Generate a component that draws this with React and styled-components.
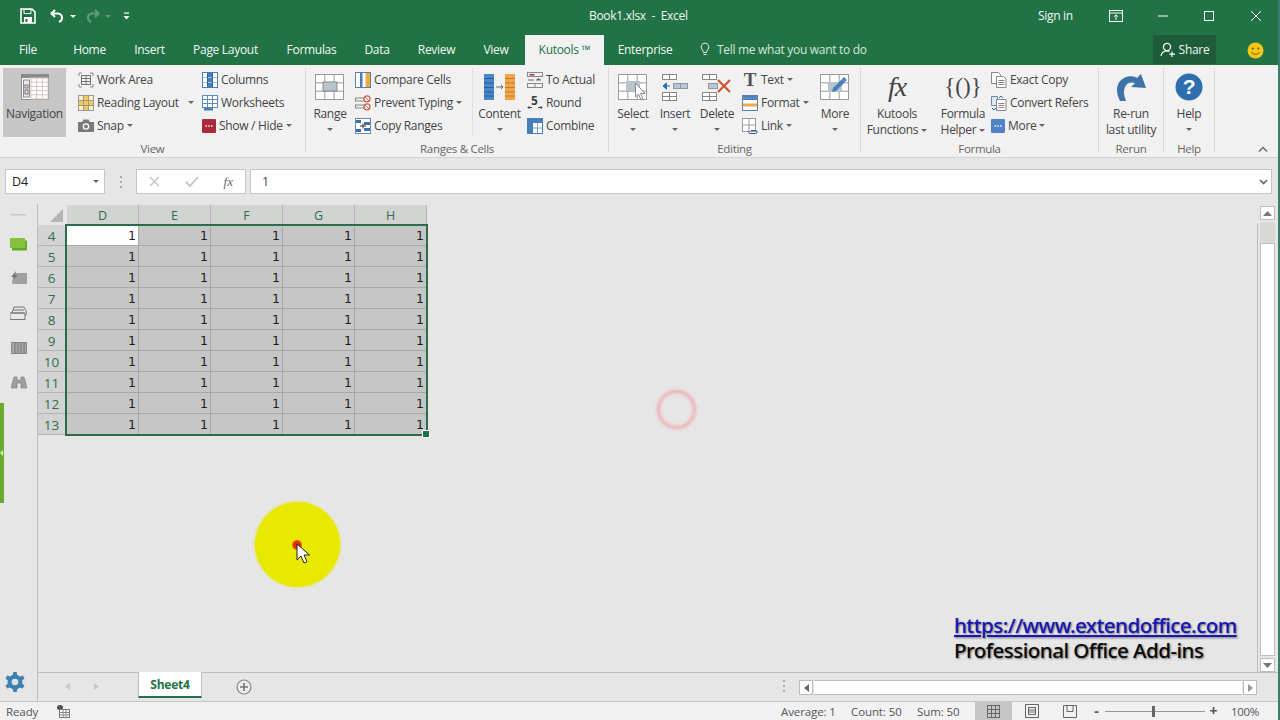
import React from 'react';
import styled, { createGlobalStyle } from 'styled-components';

const Global = createGlobalStyle`
  html, body { margin: 0; padding: 0; background: #e6e6e6; }
  * { box-sizing: border-box; }
  body { font-family: "Open Sans", "Noto Sans", sans-serif; }
`;

const Page = styled.div`
  position: relative; width: 1280px; height: 720px; overflow: hidden;
  display: flex; flex-direction: column; background: #e6e6e6;
  font-size: 12px; color: #444; letter-spacing: -0.3px;
  &::after { content: ""; position: absolute; right: 0; top: 0; bottom: 0; width: 2px; background: #3b7d6b; }
`;
const Header = styled.header`background: #217346; color: #f2f7f4; height: 65px; flex: none;`;
const TitleRow = styled.div`height: 35px; display: flex; align-items: center; padding-bottom: 3px;`;
const Qat = styled.div`display: flex; align-items: center; padding-left: 20px; width: 589px;`;
const QatSlot = styled.span`display: flex; align-items: center; width: ${p => p.$w}px; opacity: ${p => p.$dim ? 0.3 : 1};`;
const Title = styled.div`width: 449px; margin-top: -1px;`;
const SignIn = styled.div`width: 55px; margin-top: -1px;`;
const WinBtn = styled.span`width: 46.5px; display: flex; justify-content: center;`;
const TabRow = styled.nav`height: 30px; display: flex; align-items: stretch;`;
const Tab = styled.div`
  width: ${p => p.$w}px; display: flex; align-items: center; justify-content: center; padding-bottom: 2px;
  background: ${p => p.$active ? '#f1f1f1' : 'transparent'};
  color: ${p => p.$active ? '#217346' : 'inherit'};
`;
const TellMe = styled.div`width: 467px; padding: 0 0 2px 14px; display: flex; align-items: center; gap: 7px; color: #d6e6dc;`;
const Share = styled.div`
  width: 63px; height: 29px; background: #1e5c39; display: flex; align-items: center;
  justify-content: center; gap: 3px;
`;
const Smile = styled.div`margin-left: 31px; align-self: center;`;

const Ribbon = styled.section`
  height: 93px; flex: none; background: #f1f1f1; border-bottom: 1px solid #d2d2d2; display: flex;
`;
const Group = styled.div`
  width: ${p => p.$w}px; flex: none; display: flex; flex-direction: column;
  border-right: 1px solid #d8d8d8; margin-top: 3px; margin-bottom: 5px;
`;
const GroupBody = styled.div`flex: 1; display: flex; padding-left: ${p => p.$pad || 0}px;`;
const GroupLabel = styled.div`height: 13px; text-align: center; font-size: 11.5px; color: #666; line-height: 20px;`;
const Large = styled.div`
  width: ${p => p.$w}px; flex: none; display: flex; flex-direction: column; align-items: center;
  height: 69px; line-height: 16px; text-align: center; white-space: nowrap;
  background: ${p => p.$on ? '#c6c6c6' : 'transparent'};
  margin-right: ${p => p.$mr || 0}px;
`;
const LargeIcon = styled.div`height: 38px; display: flex; align-items: center; justify-content: center; flex: none;`;
const Col = styled.div`
  width: ${p => p.$w}px; flex: none; padding-left: ${p => p.$pl || 0}px; display: flex; flex-direction: column;
  border-right: ${p => p.$div ? '1px solid #e0e0e0' : 'none'}; height: 69px;
`;
const Item = styled.div`height: 23px; display: flex; align-items: center; gap: 3px; white-space: nowrap;`;
const Caret = styled.span`
  display: inline-block; width: 0; height: 0; flex: none;
  border-left: 3px solid transparent; border-right: 3px solid transparent;
  border-top: 3px solid ${p => p.$c || '#666'};
  margin-left: ${p => p.$ml || 0}px; vertical-align: middle;
`;
const CaretLine = styled.div`height: 16px; display: flex; align-items: center; justify-content: center;`;
const Collapse = styled.div`margin: auto 12px 4px auto;`;

const FormulaBar = styled.div`
  height: 46px; flex: none; display: flex; padding: 11px 8px 0 5px; align-items: flex-start;
`;
const Field = styled.div`
  height: 25px; background: #fff; border: 1px solid #c6c6c6; display: flex; align-items: center;
  width: ${p => p.$w ? p.$w + 'px' : 'auto'}; flex: ${p => p.$w ? 'none' : 1};
  color: #444; font-size: 12.5px; letter-spacing: 0;
`;
const NameBox = styled(Field)`padding: 0 5px 0 6px; justify-content: space-between; color: #222;`;
const Grip = styled.div`width: 31px; height: 25px; display: flex; align-items: center; justify-content: center;`;
const FxButtons = styled(Field)`justify-content: space-between; padding: 0 12px; margin-right: 4px;`;
const FormulaInput = styled(Field)`padding: 0 3px 0 11px; justify-content: space-between;`;

const Work = styled.div`flex: 1; display: flex; min-height: 0;`;
const Side = styled.aside`
  width: 38px; flex: none; border-right: 1px solid #bdbdbd; position: relative;
  display: flex; flex-direction: column; align-items: center;
`;
const SideSlot = styled.div`
  height: 35px; display: flex; align-items: center; justify-content: center; width: 100%;
  padding-top: ${p => p.$pt || 0}px;
`;
const SideDash = styled.div`height: 21px; width:100%; display:flex; align-items:center; justify-content:center;`;
const SideBar = styled.div`
  position: absolute; left: 0; top: 199px; width: 4px; height: 100px; background: #6aab2e;
  &::after { content: ""; position: absolute; left: 0; top: 47px; border-left: 3px solid #d8e8c8; border-top: 3px solid transparent; border-bottom: 3px solid transparent; transform: scaleX(-1); }
`;
const Gear = styled.div`margin-top: auto; margin-bottom: 9px; margin-left: -8px;`;
const Right = styled.div`flex: 1; display: flex; flex-direction: column; min-width: 0;`;
const SheetArea = styled.div`height: 469px; display: flex; flex: none; border-bottom: 1px solid #bdbdbd;`;
const TableWrap = styled.div`flex: 1; padding-top: 1px;`;
const Table = styled.div`
  display: grid; grid-template-columns: 29px repeat(5, 72px); grid-template-rows: 20px repeat(10, 21px);
  width: max-content; position: relative;
`;
const Corner = styled.div`background: #e6e6e6; display: flex; align-items: flex-end; justify-content: flex-end; padding: 0 4px 3px 0;`;
const ColHead = styled.div`
  background: #d2d4d2; border-right: 1px solid #b4b4b4; color: #2f6b4f; display: flex; align-items: center;
  justify-content: center; font-size: 12.5px; letter-spacing: 0;
`;
const RowHead = styled.div`
  background: #d2d3d2; border-bottom: 1px solid #b4b4b4; color: #2f6b4f; display: flex; align-items: center;
  justify-content: center; font-size: 13.5px; letter-spacing: 0; padding: 1px 2px 0 0;
`;
const Cell = styled.div`
  background: ${p => p.$first ? '#ffffff' : '#c6c6c6'}; border-right: 1px solid #a9a9a9; border-bottom: 1px solid #a9a9a9;
  display: flex; align-items: center; justify-content: flex-end; padding: 1px 2px 0 0;
  font-family: "DejaVu Sans", sans-serif; font-size: 12.5px; color: #1c1c1c; letter-spacing: 0;
`;
const Selection = styled.div`
  position: absolute; left: 27px; top: 19px; width: 363px; height: 212px; border: 2px solid #2c6b4e; pointer-events: none;
`;
const Handle = styled.div`position: absolute; right: -3px; bottom: -3px; width: 6px; height: 6px; background: #217346; outline: 1px solid #fff;`;
const VScroll = styled.div`
  width: 23px; flex: none; position: relative; padding: 2px 5px 0 3px; display: flex; flex-direction: column;
  &::before { content: ""; position: absolute; left: 0; top: 20px; bottom: 0; width: 1px; background: #bdbdbd; }
`;
const ScrollBtn = styled.div`
  height: ${p => p.$h || 14}px; width: ${p => p.$w || 15}px; flex: none; background: #fff; border: 1px solid #bdbdbd;
  display: flex; align-items: center; justify-content: center;
`;
const VTrack = styled.div`flex: 1; display: flex; flex-direction: column; padding: 2px 0;`;
const VGap = styled.div`height: 21px; flex: none; background: #d8d8d6;`;
const VThumb = styled.div`flex: 1; background: #fff; border: 1px solid #bdbdbd;`;

const TabsBar = styled.div`flex: 1; display: flex; align-items: flex-start;`;
const NavArrows = styled.div`width: 100px; display: flex; gap: 24px; padding: 10px 0 0 27px;`;
const SheetTab = styled.div`
  width: 64px; height: 26px; margin-top: -1px; background: #fff; border-bottom: 2px solid #217346; border-left: 1px solid #bdbdbd; border-right: 1px solid #bdbdbd;
  color: #217346; font-weight: 700; font-size: 12px; display: flex; align-items: center; justify-content: center; letter-spacing: -0.2px;
`;
const AddSheet = styled.div`margin: 6px 0 0 34px; width: 16px;`;
const TabGrip = styled.div`margin: 7px 0 0 531px; width: 16px;`;
const HScroll = styled.div`width: 458px; height: 15px; margin: 7px 0 0 0; display: flex; flex: none;`;
const HThumb = styled.div`flex: 1; background: #fff; border-top: 1px solid #bdbdbd; border-bottom: 1px solid #bdbdbd; margin: 0 1px;`;

const Status = styled.footer`
  height: 19px; flex: none; background: #f1f1f1; border-top: 1px solid #c6c6c6; display: flex; align-items: center;
  font-size: 11.5px; color: #555; padding-left: 6px; letter-spacing: -0.1px;
`;
const Ready = styled.div`width: 51px;`;
const StatusStat = styled.div`width: ${p => p.$w}px; flex: none; white-space: nowrap;`;
const ViewBtn = styled.div`
  width: ${p => p.$w}px; height: 18px; flex: none; display: flex; align-items: center; justify-content: center;
  background: ${p => p.$on ? '#c6c6c6' : 'transparent'};
`;
const Zoomer = styled.div`display: flex; align-items: center; margin-left: 3px; width: 130px; height: 18px;`;
const ZoomTrack = styled.div`width: 100px; height: 1px; background: #999; margin: 0 4px; position: relative;`;
const ZoomThumb = styled.div`position: absolute; left: 47px; top: -5px; width: 3px; height: 11px; background: #666;`;
const ZoomSign = styled.span`font-size: 14px; font-weight: 700; width: 9px; text-align: center; color: #555; line-height: 1;`;
const Percent = styled.div`margin-left: 9px; letter-spacing: -0.3px;`;

const Watermark = styled.div`
  position: absolute; left: 954px; top: 613px; font-family: "Noto Sans", sans-serif; font-weight: 500;
  font-size: 20.6px; line-height: 25px; letter-spacing: -0.55px; white-space: nowrap;
  text-shadow: 1px 1px 2px rgba(0,0,0,0.5);
`;
const WmLink = styled.div`color: #1515b8; text-decoration: underline; text-underline-offset: 2px; text-decoration-thickness: 2px;`;
const WmText = styled.div`color: #0a0a0a;`;
const Highlight = styled.div`
  position: absolute; left: 255px; top: 502px; width: 85px; height: 85px; border-radius: 50%;
  background: #e8e800; box-shadow: 0 0 3px #e8e800; pointer-events: none;
`;
const RedDot = styled.div`
  position: absolute; left: 37px; top: 38px; width: 10px; height: 10px; border-radius: 50%;
  background: radial-gradient(circle, #e02a10 40%, #f09000 90%);
`;
const CursorWrap = styled.div`position: absolute; left: 296px; top: 543px; pointer-events: none; line-height: 0;`;
const Ripple = styled.div`
  position: absolute; left: 657px; top: 390px; width: 39px; height: 39px; border-radius: 50%;
  border: 3px solid #eeb4b8; filter: blur(0.8px); box-shadow: inset 0 0 3px #e9c4c6, 0 0 3px #e9c4c6;
`;

const Svg = ({ w = 16, h = 16, children, vb }) => (
  <svg width={w} height={h} viewBox={vb || `0 0 ${w} ${h}`} fill="none" style={{ display: 'block', flex: 'none' }}>{children}</svg>
);

const GridGlyph = ({ x = 0.5, y = 0.5, w = 27, h = 24, cols = 4, rows = 4, c = '#9a9a9a', fill = '#fff' }) => {
  const l = [];
  for (let i = 1; i < cols; i++) l.push(<line key={'c' + i} x1={x + w * i / cols} x2={x + w * i / cols} y1={y} y2={y + h} stroke={c} />);
  for (let i = 1; i < rows; i++) l.push(<line key={'r' + i} y1={y + h * i / rows} y2={y + h * i / rows} x1={x} x2={x + w} stroke={c} />);
  return <g><rect x={x} y={y} width={w} height={h} fill={fill} stroke={c} />{l}</g>;
};

const icons = {
  save: <Svg w={16} h={16}><path d="M1 1h11l3 3v11H1z" stroke="#fff" strokeWidth="1.6"/><path d="M4 1.5h7v4H4z" stroke="#fff" fill="#217346"/><path d="M4 9h8v6H4z" fill="#fff"/><rect x="5.5" y="11" width="2" height="3" fill="#217346"/></Svg>,
  undo: <Svg w={15} h={14}><path d="M5 1L1.5 4.5 5 8" stroke="#fff" strokeWidth="2"/><path d="M2 4.5h6a4 4 0 0 1 4 4.2c0 2-1 3.5-3 4.3" stroke="#fff" strokeWidth="2"/></Svg>,
  redo: <Svg w={15} h={14}><path d="M10 1l3.5 3.5L10 8" stroke="#fff" strokeWidth="2"/><path d="M13 4.5H7a4 4 0 0 0-4 4.2c0 2 1 3.5 3 4.3" stroke="#fff" strokeWidth="2"/></Svg>,
  custom: <Svg w={7} h={8}><rect x="1" y="0.5" width="5" height="1.2" fill="#fff"/><path d="M0.5 4h6L3.5 7.5z" fill="#fff"/></Svg>,
  ribbonOpts: <Svg w={14} h={12}><rect x=".5" y=".5" width="13" height="11" stroke="#fff"/><line x1="0" x2="14" y1="3" y2="3" stroke="#fff"/><path d="M7 10V5M5 6.8L7 4.8l2 2" stroke="#fff"/></Svg>,
  min: <Svg w={10} h={10}><line x1="0" x2="10" y1="5" y2="5" stroke="#fff"/></Svg>,
  max: <Svg w={10} h={10}><rect x=".5" y=".5" width="9" height="9" stroke="#fff"/></Svg>,
  close: <Svg w={10} h={10}><path d="M0 0l10 10M10 0L0 10" stroke="#fff"/></Svg>,
  bulb: <Svg w={10} h={14}><path d="M5 1a4 4 0 0 0-2.500 7c.7.700.8 1.500.9 2.500h3.200c.1-1 .2-1.800.9-2.500A4 4 0 0 0 5 1z" stroke="#e4efe8"/><path d="M3.500 12.500h3" stroke="#e4efe8"/></Svg>,
  person: <Svg w={16} h={16}><circle cx="7" cy="5" r="3.600" stroke="#fff" strokeWidth="1.200"/><path d="M1 14c.6-3.200 2.600-5 6-5 1 0 1.700.2 2.400.5" stroke="#fff" strokeWidth="1.200"/><path d="M12 9.500v5.500M9.300 12.200H15" stroke="#fff" strokeWidth="1.200"/></Svg>,
  smile: <Svg w={17} h={17}><circle cx="8.500" cy="8.500" r="8" fill="#f5c518"/><circle cx="5.800" cy="6.500" r="1.100" fill="#7a5a00"/><circle cx="11.200" cy="6.500" r="1.100" fill="#7a5a00"/><path d="M4.500 10.300c1.500 2.600 6.500 2.600 8 0" stroke="#7a5a00" strokeWidth="1"/></Svg>,
  nav: <Svg w={28} h={26}><rect x=".5" y=".5" width="27" height="25" fill="#fff" stroke="#8a8a8a"/><rect x="1" y="1" width="26" height="3" fill="#8a8a8a"/><GridGlyph x={10} y={4} w={17} h={21} cols={3} rows={5} c="#d8c4c0"/><rect x="2.500" y="6" width="6" height="17" fill="#e8e8e8" stroke="#8a8a8a"/><rect x="4" y="11" width="3" height="3" stroke="#777"/><rect x="4" y="16" width="3" height="4" stroke="#777"/></Svg>,
  workArea: <Svg w={16} h={16}><path d="M1 4V1h3M12 1h3v3M15 12v3h-3M4 15H1v-3" stroke="#888"/><rect x="3.500" y="3.500" width="9" height="9" stroke="#777"/><path d="M3.500 6.500h9M3.500 9.500h9M8 3.500v9" stroke="#777"/></Svg>,
  reading: <Svg w={16} h={16}><rect x=".5" y=".5" width="15" height="15" fill="#f8f0c8" stroke="#9a9a9a"/><rect x="6" y="1" width="4" height="14" fill="#f0c860"/><rect x="1" y="6" width="14" height="4" fill="#f0c860"/><path d="M5.500 1v14M10.500 1v14M1 5.500h14M1 10.500h14" stroke="#a09878"/></Svg>,
  camera: <Svg w={16} h={13}><path d="M0 3h4l1.500-2.500h5L12 3h4v10H0z" fill="#7a7a7a"/><circle cx="8" cy="7.500" r="3.300" fill="#fff"/><circle cx="8" cy="7.500" r="2" fill="#7a7a7a"/></Svg>,
  columns: <Svg w={16} h={16}><rect x=".5" y=".5" width="15" height="15" fill="#fff" stroke="#4a7ebb"/><rect x="5.500" y="1" width="5" height="14" fill="#4a7ebb"/><path d="M1 5.500h14M1 10.500h14" stroke="#a8c4e0"/><path d="M5.500 1v14M10.500 1v14" stroke="#2f5f9a"/></Svg>,
  worksheets: <Svg w={16} h={16}><GridGlyph x={.5} y={.5} w={15} h={12} cols={3} rows={3} c="#5b8cc0"/><rect x="2" y="13" width="9" height="2.500" fill="#4a7ebb"/></Svg>,
  showHide: <Svg w={14} h={14}><rect width="14" height="14" rx="1" fill="#a92b3a"/><path d="M3.500 7h1.400M6.300 7h1.400M9.100 7h1.400" stroke="#fff" strokeWidth="1.400"/></Svg>,
  range: <Svg w={30} h={26}><GridGlyph x={.5} y={.5} w={28} h={25} cols={3} rows={3}/><rect x="8" y="8" width="14" height="9" fill="#b8c4cc" stroke="#8a8a8a"/></Svg>,
  compare: <Svg w={16} h={16}><rect x=".5" y=".5" width="15" height="15" fill="#fff" stroke="#5b7fa8"/><rect x="5" y="1" width="2.500" height="14" fill="#4a7ebb"/><rect x="10.500" y="1" width="4.500" height="14" fill="#f0a848"/></Svg>,
  prevent: <Svg w={16} h={16}><rect x=".5" y="3" width="9" height="3" stroke="#888"/><rect x=".5" y="10" width="9" height="3" stroke="#888"/><circle cx="12" cy="3.800" r="3" fill="#fff" stroke="#d0604a" strokeWidth="1.300"/><circle cx="12" cy="11.800" r="3" fill="#fff" stroke="#d0604a" strokeWidth="1.300"/><path d="M10 2l4 4M10 10l4 4" stroke="#d0604a"/></Svg>,
  copyRanges: <Svg w={16} h={16}><rect x=".5" y=".5" width="15" height="15" fill="#fff" stroke="#6a8ab0"/><rect x="1" y="2" width="5" height="3" fill="#3a70b0"/><rect x="9" y="4" width="6" height="3" fill="#3a70b0"/><rect x="1" y="11" width="5" height="3" fill="#3a70b0"/><rect x="9" y="10" width="6" height="3" fill="#3a70b0"/><path d="M5 8h6M8 5.500v5" stroke="#333"/></Svg>,
  content: <Svg w={31} h={26}><rect x="0" y="0" width="10" height="26" fill="#4a88cc"/><path d="M0 4.500h10M0 9h10M0 13.500h10M0 18h10M0 22h10" stroke="#2a5a98"/><rect x="21" y="0" width="10" height="26" fill="#f3a54a"/><path d="M21 4.500h10M21 9h10M21 13.500h10M21 18h10M21 22h10" stroke="#c07a28"/><path d="M12 13h7M17 11l2 2-2 2" stroke="#666"/></Svg>,
  toActual: <Svg w={16} h={16}><rect x=".5" y=".5" width="15" height="4" stroke="#888"/><rect x="2.500" y="2" width="5" height="1.500" fill="#b03030"/><path d="M1 8h6M9 8h5" stroke="#666"/><path d="M11.500 6l-2 2h4z" fill="#666"/><rect x=".5" y="11.500" width="15" height="4" stroke="#888"/><path d="M8 11.500v4" stroke="#888"/></Svg>,
  round: <Svg w={16} h={16}><path d="M1 12.500h4M1 12.500l1.500-1.500M1 12.500L2.500 14M15 12.500h-4M15 12.500l-1.500-1.500M15 12.500L13.500 14" stroke="#444"/></Svg>,
  combine: <Svg w={16} h={16}><rect x=".5" y=".5" width="15" height="15" fill="#fff" stroke="#4a7ebb"/><rect x="1" y="1" width="14" height="4" fill="#4a7ebb"/><rect x="1" y="1" width="5" height="14" fill="#4a7ebb"/><path d="M6 10h9M10.500 5v10" stroke="#7aa0cc"/></Svg>,
  select: <Svg w={30} h={27}><GridGlyph x={.5} y={.5} w={28} h={25} cols={3} rows={3}/><rect x="8" y="7" width="14" height="10" fill="#b8c4cc"/><path d="M17.500 9v14l3-3 2.500 6 2-1-2.500-5.500h4.500z" fill="#fff" stroke="#888"/></Svg>,
  insert: <Svg w={26} h={27}><rect x=".5" y=".5" width="14" height="5" fill="#fff" stroke="#888"/><path d="M7.500 .5v5" stroke="#888"/><rect x="11.500" y="9.500" width="14" height="5" fill="#bcc6d0" stroke="#8a98a8"/><path d="M18.500 9.500v5" stroke="#8a98a8"/><path d="M1 12h7M4.500 9L1 12l3.500 3z" fill="#2a6ab0" stroke="#2a6ab0"/><rect x=".5" y="18.500" width="14" height="8" fill="#fff" stroke="#888"/><path d="M.5 22.500h14M7.500 18.500v8" stroke="#888"/></Svg>,
  del: <Svg w={30} h={27}><rect x=".5" y=".5" width="14" height="5" fill="#fff" stroke="#888"/><path d="M7.500 .5v5" stroke="#888"/><rect x="6.500" y="9.500" width="9" height="5" fill="#bcc6d0" stroke="#8a98a8"/><rect x=".5" y="18.500" width="14" height="8" fill="#fff" stroke="#888"/><path d="M.5 22.500h14M7.500 18.500v8" stroke="#888"/><path d="M16 6l12 12M28 6L16 18" stroke="#d2583c" strokeWidth="2.400"/></Svg>,
  format: <Svg w={16} h={16}><rect x=".5" y=".5" width="15" height="15" fill="#fff" stroke="#5b7fa8"/><rect x="1" y="1" width="14" height="4" fill="#4a7ebb"/><path d="M1 3h14" stroke="#9ac" strokeDasharray="1 1"/><rect x="1" y="8.500" width="14" height="3" fill="#f0a848"/></Svg>,
  link: <Svg w={16} h={16}><GridGlyph x={.5} y={.5} w={13} h={13} cols={2} rows={2}/><path d="M9 12.500h4.500a1.500 1.500 0 0 1 0 3H8a1.500 1.500 0 0 1-1-2.500" stroke="#2a5a98"/></Svg>,
  more: <Svg w={30} h={26}><GridGlyph x={.5} y={.5} w={28} h={25} cols={3} rows={3}/><rect x="8" y="8" width="14" height="10" fill="#b8c4cc"/><path d="M12 18l1-4 9-9 3 3-9 9z" fill="#4a7ebb"/><path d="M22 5l2-2 3 3-2 2z" fill="#4a7ebb"/></Svg>,
  exactCopy: <Svg w={16} h={16}><path d="M.5 .5h7l2 2v9H.5z" fill="#fff" stroke="#888"/><path d="M5.500 4.500h7l2.500 2.500v8.500H5.500z" fill="#fff" stroke="#888"/><path d="M7.500 8.500h6M7.500 10.500h6M7.500 12.500h6" stroke="#888"/></Svg>,
  convert: <Svg w={16} h={16}><path d="M.5 1.500h6v9h-6z" fill="#dfe8f2" stroke="#6a8ab0"/><path d="M5.500 4.500h9.500v11H5.500z" fill="#fff" stroke="#888"/><path d="M7.500 8.500h6M7.500 10.500h6M7.500 12.500h6" stroke="#888"/><path d="M8 3l2-2 2 2M1 13l2 2 2-2" stroke="#2a6ab0"/></Svg>,
  moreF: <Svg w={14} h={14}><rect width="14" height="14" rx="1" fill="#4f81c7"/><path d="M3.500 7h1.400M6.300 7h1.400M9.100 7h1.400" stroke="#fff" strokeWidth="1.400"/></Svg>,
  rerun: <Svg w={32} h={30}><path d="M5 29C-1 18 2 7 13 4.500c4-.9 7 0 9 1.500L26 2l5 14-15-1 4-3.800c-3-1.400-6.500-1-8.500 1.500C8 17 8.500 23 11 29z" fill="#3f72a8"/></Svg>,
  help: <Svg w={28} h={28}><circle cx="14" cy="14" r="13.500" fill="#2e6db0"/></Svg>,
  chevronUp: <Svg w={10} h={7}><path d="M1 5.500l4-4 4 4" stroke="#666" strokeWidth="1.400"/></Svg>,
  chevronDown: <Svg w={9} h={6}><path d="M1 1l3.500 3.500L8 1" stroke="#666" strokeWidth="1.700"/></Svg>,
  x: <Svg w={11} h={11}><path d="M1 1l9 9M10 1l-9 9" stroke="#c4c4c4" strokeWidth="1.500"/></Svg>,
  check: <Svg w={14} h={11}><path d="M1 6l4 4 8-9" stroke="#c4c4c4" strokeWidth="1.800"/></Svg>,
  dots: <Svg w={2} h={12}><path d="M1 0v2M1 5v2M1 10v2" stroke="#aaa" strokeWidth="2"/></Svg>,
  corner: <Svg w={13} h={13}><path d="M13 0v13H0z" fill="#b4b4b4"/></Svg>,
  sideDash: <Svg w={15} h={2}><rect width="15" height="1.500" fill="#c8c8c8"/></Svg>,
  sideGreen: <Svg w={17} h={13}><rect x="2" y="2.500" width="15" height="10" fill="#68a82c"/><rect y="0" width="15" height="10" fill="#86c03c"/></Svg>,
  sideFlash: <Svg w={17} h={13}><path d="M4 2h13v11H2z" fill="#a0a0a0"/><path d="M6 0L1 6h3L2 10l6-6H5z" fill="#777"/></Svg>,
  sideStack: <Svg w={17} h={14}><rect x="0" y="7" width="15" height="6.500" fill="#e8e8e8" stroke="#777"/><path d="M2 7l2-6h10l3 6-2 3M1.500 7h13M3 4h11" stroke="#777"/></Svg>,
  sideCols: <Svg w={16} h={12}><rect x=".5" y=".5" width="15" height="11" fill="#a8a8a8" stroke="#888"/><path d="M4 0v12M7 0v12M10 0v12M13 0v12" stroke="#777"/></Svg>,
  sideBino: <Svg w={16} h={13}><path d="M3 1h3v3h4V1h3l3 11h-6V7H6v5H0z" fill="#a0a0a0" stroke="#777" strokeWidth=".6"/></Svg>,
  gear: <Svg w={20} h={20}><g fill="#3f81ac"><circle cx="10" cy="10" r="7.500"/><rect x="8" y="0" width="4" height="20" rx="1"/><rect x="8" y="0" width="4" height="20" rx="1" transform="rotate(60 10 10)"/><rect x="8" y="0" width="4" height="20" rx="1" transform="rotate(120 10 10)"/></g><circle cx="10" cy="10" r="3.300" fill="#d6e4ec"/></Svg>,
  navL: <Svg w={5} h={7}><path d="M5 0v7L0 3.500z" fill="#c8c8c8"/></Svg>,
  navR: <Svg w={5} h={7}><path d="M0 0v7l5-3.500z" fill="#c8c8c8"/></Svg>,
  plus: <Svg w={16} h={16}><circle cx="8" cy="8" r="7" fill="#ececec" stroke="#888" strokeWidth="1.200"/><path d="M8 4v8M4 8h8" stroke="#777" strokeWidth="1.600"/></Svg>,
  upTri: <Svg w={9} h={5}><path d="M4.500 0L9 5H0z" fill="#777"/></Svg>,
  downTri: <Svg w={9} h={5}><path d="M4.500 5L9 0H0z" fill="#777"/></Svg>,
  leftTri: <Svg w={5} h={8}><path d="M0 4l5-4v8z" fill="#666"/></Svg>,
  rightTri: <Svg w={5} h={8}><path d="M5 4L0 0v8z" fill="#999"/></Svg>,
  macro: <Svg w={13} h={13}><rect x="0" y="0" width="6" height="5" rx="2.500" fill="#555"/><rect x="2.500" y="4.500" width="10" height="8" fill="#fff" stroke="#777"/><path d="M2.500 7.500h10M2.500 10h10M6 4.500v8M9 4.500v8" stroke="#888"/></Svg>,
  normalView: <Svg w={13} h={13}><rect x=".5" y=".5" width="12" height="12" stroke="#666"/><path d="M4.500 0v13M8.500 0v13M0 4.500h13M0 8.500h13" stroke="#666"/></Svg>,
  layoutView: <Svg w={14} h={14}><rect x=".5" y=".5" width="13" height="13" stroke="#666"/><rect x="3.500" y="3.500" width="7" height="7" stroke="#666"/><path d="M3.500 6h7M3.500 8h7" stroke="#666"/></Svg>,
  breakView: <Svg w={14} h={13}><path d="M.5 .5h13v12H.5zM4 .5v6h6v-6" stroke="#666"/></Svg>,
  cursor: <Svg w={15} h={22}><path d="M1 1v16l4-4 3 7 3-1.300-3-6.700h5.500z" fill="#fff" stroke="#222" strokeWidth="1"/></Svg>,
};

const HelpMark = styled.div`position: relative; width: 28px; height: 28px;`;
const HelpQ = styled.span`
  position: absolute; inset: 0; display: flex; align-items: center; justify-content: center;
  color: #fff; font: 700 21px "Liberation Sans", sans-serif;
`;
const FxGlyph = styled.span`font: italic 28px "Liberation Serif", serif; color: #444; letter-spacing: -1px;`;
const BraceGlyph = styled.span`font: 23px "Liberation Serif", serif; color: #444; letter-spacing: 0;`;
const TGlyph = styled.span`font: 700 19px/16px "Liberation Serif", serif; color: #555; width: 16px; text-align: center;`;
const RoundIcon = styled.div`position: relative; width: 16px; height: 16px; flex: none;`;
const RoundFive = styled.span`position: absolute; left: 4px; top: -3px; font: 700 12px "Open Sans", sans-serif; color: #444;`;
const FxSmall = styled.span`font: italic 13px "Liberation Serif", serif; color: #666;`;

const LargeBtn = ({ w, icon, label, label2, caret, on, mr }) => (
  <Large $w={w} $on={on} $mr={mr}>
    <LargeIcon>{icon}</LargeIcon>
    <div>{label}</div>
    {label2 && <div>{label2}{caret && <Caret $ml={3} />}</div>}
    {!label2 && caret && <CaretLine><Caret /></CaretLine>}
  </Large>
);
const Row = ({ icon, children, caret, ml }) => (
  <Item>{icon}<span>{children}</span>{caret && <Caret $ml={ml || 0} />}</Item>
);

const cols = ['D', 'E', 'F', 'G', 'H'];
const rows = [4, 5, 6, 7, 8, 9, 10, 11, 12, 13];

export default function App() {
  return (
    <Page>
      <Global />
      <Header>
        <TitleRow>
          <Qat>
            <QatSlot $w={30}>{icons.save}</QatSlot>
            <QatSlot $w={35}>{icons.undo}<Caret $c="#fff" $ml={5} /></QatSlot>
            <QatSlot $w={38} $dim>{icons.redo}<Caret $c="#fff" $ml={5} /></QatSlot>
            <QatSlot $w={10}>{icons.custom}</QatSlot>
          </Qat>
          <Title>Book1.xlsx&nbsp; - &nbsp;Excel</Title>
          <SignIn>Sign in</SignIn>
          <WinBtn>{icons.ribbonOpts}</WinBtn>
          <WinBtn>{icons.min}</WinBtn>
          <WinBtn>{icons.max}</WinBtn>
          <WinBtn>{icons.close}</WinBtn>
        </TitleRow>
        <TabRow>
          <Tab $w={56}>File</Tab>
          <Tab $w={67}>Home</Tab>
          <Tab $w={53}>Insert</Tab>
          <Tab $w={99}>Page Layout</Tab>
          <Tab $w={73}>Formulas</Tab>
          <Tab $w={58}>Data</Tab>
          <Tab $w={61}>Review</Tab>
          <Tab $w={58}>View</Tab>
          <Tab $w={79} $active>Kutools ™</Tab>
          <Tab $w={82}>Enterprise</Tab>
          <TellMe>{icons.bulb}Tell me what you want to do</TellMe>
          <Share>{icons.person}Share</Share>
          <Smile>{icons.smile}</Smile>
        </TabRow>
      </Header>

      <Ribbon>
        <Group $w={306}>
          <GroupBody $pad={3}>
            <LargeBtn w={63} on icon={icons.nav} label="Navigation" />
            <Col $w={136} $pl={12}>
              <Row icon={icons.workArea}>Work Area</Row>
              <Row icon={icons.reading} caret ml={6}>Reading Layout</Row>
              <Row icon={icons.camera} caret>Snap</Row>
            </Col>
            <Col $w={103}>
              <Row icon={icons.columns}>Columns</Row>
              <Row icon={icons.worksheets}>Worksheets</Row>
              <Row icon={icons.showHide} caret>Show / Hide</Row>
            </Col>
          </GroupBody>
          <GroupLabel>View</GroupLabel>
        </Group>
        <Group $w={303}>
          <GroupBody>
            <LargeBtn w={48} icon={icons.range} label="Range" caret />
            <Col $w={119} $pl={1} $div>
              <Row icon={icons.compare}>Compare Cells</Row>
              <Row icon={icons.prevent} caret>Prevent Typing</Row>
              <Row icon={icons.copyRanges}>Copy Ranges</Row>
            </Col>
            <LargeBtn w={53} icon={icons.content} label="Content" caret />
            <Col $w={80} $pl={1}>
              <Row icon={icons.toActual}>To Actual</Row>
              <Row icon={<RoundIcon>{icons.round}<RoundFive>5</RoundFive></RoundIcon>}>Round</Row>
              <Row icon={icons.combine}>Combine</Row>
            </Col>
          </GroupBody>
          <GroupLabel>Ranges &amp; Cells</GroupLabel>
        </Group>
        <Group $w={252}>
          <GroupBody $pad={3}>
            <LargeBtn w={42} icon={icons.select} label="Select" caret />
            <LargeBtn w={42} icon={icons.insert} label="Insert" caret />
            <LargeBtn w={42} icon={icons.del} label="Delete" caret />
            <Col $w={75} $pl={4}>
              <Row icon={<TGlyph>T</TGlyph>} caret>Text</Row>
              <Row icon={icons.format} caret>Format</Row>
              <Row icon={icons.link} caret>Link</Row>
            </Col>
            <LargeBtn w={44} icon={icons.more} label="More" caret />
          </GroupBody>
          <GroupLabel>Editing</GroupLabel>
        </Group>
        <Group $w={238}>
          <GroupBody $pad={5}>
            <LargeBtn w={62} mr={8} icon={<FxGlyph>fx</FxGlyph>} label="Kutools" label2="Functions" caret />
            <LargeBtn w={54} icon={<BraceGlyph>{'{()}'}</BraceGlyph>} label="Formula" label2="Helper" caret />
            <Col $w={107} $pl={1}>
              <Row icon={icons.exactCopy}>Exact Copy</Row>
              <Row icon={icons.convert}>Convert Refers</Row>
              <Row icon={icons.moreF} caret>More</Row>
            </Col>
          </GroupBody>
          <GroupLabel>Formula</GroupLabel>
        </Group>
        <Group $w={65}>
          <GroupBody><LargeBtn w={64} icon={icons.rerun} label="Re-run" label2="last utility" /></GroupBody>
          <GroupLabel>Rerun</GroupLabel>
        </Group>
        <Group $w={51}>
          <GroupBody><LargeBtn w={50} icon={<HelpMark>{icons.help}<HelpQ>?</HelpQ></HelpMark>} label="Help" caret /></GroupBody>
          <GroupLabel>Help</GroupLabel>
        </Group>
        <Collapse>{icons.chevronUp}</Collapse>
      </Ribbon>

      <FormulaBar>
        <NameBox $w={100}>D4<Caret $ml={0} /></NameBox>
        <Grip>{icons.dots}</Grip>
        <FxButtons $w={110}>{icons.x}{icons.check}<FxSmall>fx</FxSmall></FxButtons>
        <FormulaInput>1{icons.chevronDown}</FormulaInput>
      </FormulaBar>

      <Work>
        <Side>
          <SideDash>{icons.sideDash}</SideDash>
          <SideSlot $pt={3}>{icons.sideGreen}</SideSlot>
          <SideSlot>{icons.sideFlash}</SideSlot>
          <SideSlot>{icons.sideStack}</SideSlot>
          <SideSlot>{icons.sideCols}</SideSlot>
          <SideSlot>{icons.sideBino}</SideSlot>
          <SideBar />
          <Gear>{icons.gear}</Gear>
        </Side>
        <Right>
          <SheetArea>
            <TableWrap>
              <Table>
                <Corner>{icons.corner}</Corner>
                {cols.map(c => <ColHead key={c}>{c}</ColHead>)}
                {rows.map((r, ri) => (
                  <React.Fragment key={r}>
                    <RowHead>{r}</RowHead>
                    {cols.map((c, ci) => <Cell key={c} $first={ri === 0 && ci === 0}>1</Cell>)}
                  </React.Fragment>
                ))}
                <Selection><Handle /></Selection>
              </Table>
            </TableWrap>
            <VScroll>
              <ScrollBtn>{icons.upTri}</ScrollBtn>
              <VTrack><VGap /><VThumb /></VTrack>
              <ScrollBtn>{icons.downTri}</ScrollBtn>
            </VScroll>
          </SheetArea>
          <TabsBar>
            <NavArrows>{icons.navL}{icons.navR}</NavArrows>
            <SheetTab>Sheet4</SheetTab>
            <AddSheet>{icons.plus}</AddSheet>
            <TabGrip>{icons.dots}</TabGrip>
            <HScroll>
              <ScrollBtn $w={14} $h={15}>{icons.leftTri}</ScrollBtn>
              <HThumb />
              <ScrollBtn $w={14} $h={15}>{icons.rightTri}</ScrollBtn>
            </HScroll>
          </TabsBar>
        </Right>
      </Work>

      <Status>
        <Ready>Ready</Ready>
        <StatusStat $w={724}>{icons.macro}</StatusStat>
        <StatusStat $w={70}>Average: 1</StatusStat>
        <StatusStat $w={66}>Count: 50</StatusStat>
        <StatusStat $w={58}>Sum: 50</StatusStat>
        <ViewBtn $w={37} $on>{icons.normalView}</ViewBtn>
        <ViewBtn $w={39}>{icons.layoutView}</ViewBtn>
        <ViewBtn $w={38}>{icons.breakView}</ViewBtn>
        <Zoomer><ZoomSign>-</ZoomSign><ZoomTrack><ZoomThumb /></ZoomTrack><ZoomSign>+</ZoomSign></Zoomer>
        <Percent>100%</Percent>
      </Status>

      <Ripple />
      <Watermark>
        <WmLink>https://www.extendoffice.com</WmLink>
        <WmText>Professional Office Add-ins</WmText>
      </Watermark>
      <Highlight><RedDot /></Highlight>
      <CursorWrap>{icons.cursor}</CursorWrap>
    </Page>
  );
}
